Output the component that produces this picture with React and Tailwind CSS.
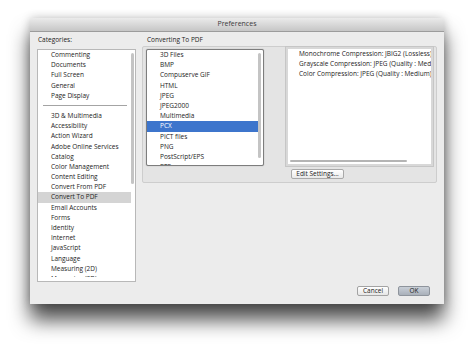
import React from 'react';

const topCategories = ['Commenting', 'Documents', 'Full Screen', 'General', 'Page Display'];
const categories = [
  '3D & Multimedia', 'Accessibility', 'Action Wizard', 'Adobe Online Services', 'Catalog',
  'Color Management', 'Content Editing', 'Convert From PDF', 'Convert To PDF', 'Email Accounts',
  'Forms', 'Identity', 'Internet', 'JavaScript', 'Language', 'Measuring (2D)', 'Measuring (3D)',
];
const fileTypes = [
  '3D Files', 'BMP', 'Compuserve GIF', 'HTML', 'JPEG', 'JPEG2000', 'Multimedia', 'PCX',
  'PICT files', 'PNG', 'PostScript/EPS', 'RTF',
];
const settings = [
  'Monochrome Compression: JBIG2 (Lossless)',
  'Grayscale Compression: JPEG (Quality : Medium)',
  'Color Compression: JPEG (Quality : Medium)',
];

function Row({ label, selected, tone }) {
  const bg = selected ? (tone === 'blue' ? 'bg-[#3d75cc] text-white' : 'bg-[#d4d4d4]') : '';
  return (
    <div className={`h-[10.2px] leading-[10.2px] pl-[13px] whitespace-nowrap ${bg}`}>{label}</div>
  );
}

export default function App() {
  return (
    <div className="w-[474px] h-[347px] bg-white overflow-hidden pt-[18px] pl-[30px] font-['Open_Sans',sans-serif] text-[6.5px] text-[#1c1c1c]">
      <div className="w-[414px] h-[286px] bg-[#ececec] flex flex-col rounded-t-[3px] shadow-[0_16px_20px_rgba(0,0,0,0.7),0_0_10px_rgba(0,0,0,0.22)]">
        {/* Title bar */}
        <div className="h-[14px] shrink-0 rounded-t-[3px] bg-gradient-to-b from-[#ebebeb] to-[#c6c6c6] border-b border-[#9c9c9c] flex items-center justify-center text-[7px] text-[#3a3a3a]">
          Preferences
        </div>

        <div className="flex pl-[7px]">
          {/* Categories */}
          <div className="w-[99px] flex flex-col">
            <div className="h-[17px] pt-[3px] leading-[10px] pl-[1px]">Categories:</div>
            <div className="relative h-[233px] bg-white border border-[#b8b8b8] pb-[4px]">
              <div className="w-[93px] h-full overflow-hidden">
                {topCategories.map((c) => <Row key={c} label={c} />)}
                <div className="h-[10px] flex items-center pl-[5px] pr-[4px]">
                  <div className="h-px w-full bg-[#a4a4a4]" />
                </div>
                {categories.map((c) => <Row key={c} label={c} selected={c === 'Convert To PDF'} />)}
              </div>
              <div className="absolute right-[1px] top-[3px] w-[3px] h-[131px] rounded-full bg-[#c4c4c4]" />
            </div>
          </div>

          {/* Converting To PDF */}
          <div className="ml-[6px] flex flex-col">
            <div className="h-[14px] pt-[3px] leading-[10px] pl-[5px]">Converting To PDF</div>
            <div className="w-[295px] h-[137px] bg-[#e4e4e4] border border-[#cdcdcd] rounded-[2px] flex pl-[3px]">
              <div className="relative mt-[2px] w-[118px] h-[117px] bg-white border border-[#7d7d7d] rounded-[2px] overflow-hidden shadow-[0_0_1px_rgba(0,0,0,0.4)]">
                <div className="w-[111px]">
                  {fileTypes.map((f) => <Row key={f} label={f} selected={f === 'PCX'} tone="blue" />)}
                </div>
                <div className="absolute right-[2px] top-[3px] w-[3px] h-[105px] rounded-full bg-[#c4c4c4]" />
              </div>

              <div className="ml-[22px] flex flex-col">
                <div className="relative w-[147px] h-[119px] bg-white border-[2px] border-[#d8d8d8] outline outline-1 outline-[#c6c6c6] overflow-hidden">
                  <div className="pl-[11px]">
                    {settings.map((s) => (
                      <div key={s} className="h-[10.2px] leading-[10.2px] whitespace-nowrap">{s}</div>
                    ))}
                  </div>
                  <div className="absolute left-[2px] bottom-[2px] w-[117px] h-[2px] rounded-full bg-[#b4b4b4]" />
                </div>
                <button className="mt-[3px] ml-[5px] w-[53px] h-[10px] leading-[8px] rounded-[2px] border border-[#a9a9a9] bg-gradient-to-b from-white to-[#e9e9e9] text-[6.5px] text-[#1c1c1c]">
                  Edit Settings...
                </button>
              </div>
            </div>
          </div>
        </div>

        <div className="flex-1" />

        {/* Dialog buttons */}
        <div className="flex justify-end gap-[9px] pr-[14px] pb-[8px]">
          <button className="w-[32px] h-[10px] leading-[8px] rounded-[2px] border border-[#a3a3a3] bg-gradient-to-b from-white to-[#e6e6e6] text-[6.5px] text-[#1c1c1c]">
            Cancel
          </button>
          <button className="w-[32px] h-[10px] leading-[8px] rounded-[2px] border border-[#8e949c] bg-gradient-to-b from-[#c9cfd7] to-[#a9b0ba] text-[6.5px] text-[#1c1c1c]">
            OK
          </button>
        </div>
      </div>
    </div>
  );
}
